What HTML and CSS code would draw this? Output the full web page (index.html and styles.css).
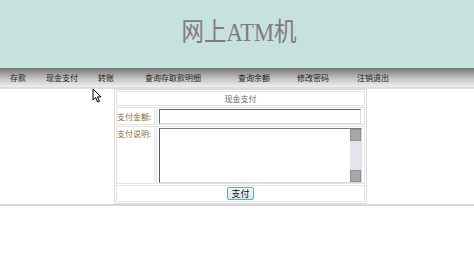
FILE: index.html
```html
<!DOCTYPE html>
<html lang="zh-CN">
<head>
<meta charset="utf-8">
<title>网上ATM机</title>
<link rel="stylesheet" href="styles.css">
</head>
<body>
<div class="header"><h1 class="title">网上ATM机</h1></div>
<div class="nav">
  <a class="nav-item">存款</a>
  <a class="nav-item">现金支付</a>
  <a class="nav-item">转账</a>
  <a class="nav-item">查询存取款明细</a>
  <a class="nav-item">查询余额</a>
  <a class="nav-item">修改密码</a>
  <a class="nav-item">注销退出</a>
</div>
<div class="main">
  <table class="form-table">
    <tr><td class="caption" colspan="2">现金支付</td></tr>
    <tr>
      <td class="label">支付金额:</td>
      <td class="field"><input class="input" type="text"></td>
    </tr>
    <tr>
      <td class="label top">支付说明:</td>
      <td class="field">
        <div class="area-box">
          <textarea class="area"></textarea>
          <div class="scrollbar"><span class="sb-btn"></span><span class="sb-btn"></span></div>
        </div>
      </td>
    </tr>
    <tr><td class="actions" colspan="2"><button class="btn">支付</button></td></tr>
  </table>
  <svg class="cursor" width="11" height="15" viewBox="0 0 11 15"><path d="M1 1 L1 12 L3.6 9.6 L5.6 14 L7.4 13.2 L5.4 8.9 L9 8.9 Z" fill="#fff" stroke="#000" stroke-width="1"/></svg>
</div>
</body>
</html>
```
FILE: styles.css
```css
html, body { margin: 0; padding: 0; background: #fff; }
body { font-family: "Noto Sans CJK SC", "Noto Sans", sans-serif; }
.header {
  height: 68px;
  background: #c5e2dd;
  display: flex;
  align-items: center;
  justify-content: center;
}
.title {
  margin: 0;
  font-family: "Liberation Serif", "Noto Sans CJK SC", serif;
  font-weight: normal;
  font-size: 22.5px;
  line-height: 26px;
  color: #84797c;
  transform: scaleY(1.15);
  padding-left: 4px;
  padding-bottom: 2px;
}
.nav {
  height: 19px;
  background: linear-gradient(#767676, #c4c4c4 55%, #efefef);
  border-bottom: 2px solid #dcdcdc;
  display: grid;
  grid-template-columns: 36px 52px 47px 93px 59px 60px auto;
  align-items: center;
  padding-left: 10px;
  font-size: 8px;
  line-height: 19px;
}
.nav-item { color: #1a1a1a; white-space: nowrap; }
.main {
  position: relative;
  border-bottom: 2px solid #d6d6d6;
}
.form-table {
  margin-left: 114px;
  width: 253px;
  border: 1px solid #dcdcdc;
  border-spacing: 1px;
  font-size: 8px;
}
.form-table td { border: 1px solid #e2e2e2; padding: 0; }
.caption { height: 13px; text-align: center; color: #666; }
.label { width: 43px; color: #8c6a3c; white-space: nowrap; padding-left: 1px; }
.label.top { vertical-align: top; padding-top: 1px; }
.form-table .field { padding: 1px 2px 0; }
.input {
  display: block;
  box-sizing: border-box;
  width: 202px;
  height: 15px;
  margin: 0;
  border: 1px solid #dadada;
  border-top-color: #666;
  border-left-color: #666;
  padding: 0;
}
.area-box {
  display: flex;
  width: 203px;
  height: 55px;
  box-sizing: border-box;
  border: 1px solid #d8d8d8;
  border-top-color: #6f7f88;
  border-left-color: #555;
}
.area {
  flex: 1;
  min-width: 0;
  margin: 0;
  border: 0;
  padding: 0;
  resize: none;
  outline: none;
}
.scrollbar {
  width: 11px;
  background: #e7e3ea;
  display: flex;
  flex-direction: column;
  justify-content: space-between;
}
.sb-btn {
  display: block;
  height: 12px;
  box-sizing: border-box;
  background: #a8a8aa;
  border: 1px solid #8f8f92;
}
.actions { height: 15px; text-align: center; }
.btn {
  font-family: "Noto Sans CJK SC", sans-serif;
  font-size: 9px;
  line-height: 11px;
  padding: 0 3px;
  margin: 0;
  border: 1px solid #5ea9bd;
  border-radius: 2px;
  background: linear-gradient(#f4f6f7, #dfe5e8);
  color: #111;
  vertical-align: middle;
}
.cursor { position: absolute; left: 92px; top: -1px; }
```
